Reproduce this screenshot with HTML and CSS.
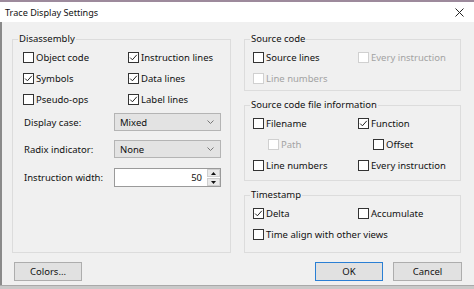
FILE: index.html
```html
<!DOCTYPE html>
<html>
<head>
<meta charset="utf-8">
<link rel="stylesheet" href="styles.css">
</head>
<body>
<div class="strip"></div>
<div class="window">
  <div class="titlebar">
    <span class="title">Trace Display Settings</span>
    <svg class="close" width="9" height="9" viewBox="0 0 9 9"><path d="M0.5 0.5 L8.5 8.5 M8.5 0.5 L0.5 8.5" stroke="#222" stroke-width="1" fill="none"/></svg>
  </div>
  <div class="content">
    <div class="columns">
      <div class="group g-dis">
        <div class="legend"><span>Disassembly</span></div>
        <div class="cbgrid left">
          <label class="cb"><svg class="box" width="11" height="11" viewBox="0 0 11 11"><rect x="0.5" y="0.5" width="10" height="10" fill="#fff" stroke="#333"/></svg>Object code</label>
          <label class="cb"><svg class="box" width="11" height="11" viewBox="0 0 11 11"><rect x="0.5" y="0.5" width="10" height="10" fill="#fff" stroke="#333"/><path d="M2.2 5.6 L4.4 7.8 L8.8 2.8" stroke="#222" fill="none"/></svg>Instruction lines</label>
          <label class="cb"><svg class="box" width="11" height="11" viewBox="0 0 11 11"><rect x="0.5" y="0.5" width="10" height="10" fill="#fff" stroke="#333"/><path d="M2.2 5.6 L4.4 7.8 L8.8 2.8" stroke="#222" fill="none"/></svg>Symbols</label>
          <label class="cb"><svg class="box" width="11" height="11" viewBox="0 0 11 11"><rect x="0.5" y="0.5" width="10" height="10" fill="#fff" stroke="#333"/><path d="M2.2 5.6 L4.4 7.8 L8.8 2.8" stroke="#222" fill="none"/></svg>Data lines</label>
          <label class="cb"><svg class="box" width="11" height="11" viewBox="0 0 11 11"><rect x="0.5" y="0.5" width="10" height="10" fill="#fff" stroke="#333"/></svg>Pseudo-ops</label>
          <label class="cb"><svg class="box" width="11" height="11" viewBox="0 0 11 11"><rect x="0.5" y="0.5" width="10" height="10" fill="#fff" stroke="#333"/><path d="M2.2 5.6 L4.4 7.8 L8.8 2.8" stroke="#222" fill="none"/></svg>Label lines</label>
        </div>
        <div class="field f-case">
          <span class="flabel">Display case:</span>
          <div class="select"><span>Mixed</span><svg class="chev" width="7" height="4" viewBox="0 0 7 4"><path d="M0.5 0.5 L3.5 3.5 L6.5 0.5" stroke="#777" fill="none"/></svg></div>
        </div>
        <div class="field f-radix">
          <span class="flabel">Radix indicator:</span>
          <div class="select"><span>None</span><svg class="chev" width="7" height="4" viewBox="0 0 7 4"><path d="M0.5 0.5 L3.5 3.5 L6.5 0.5" stroke="#777" fill="none"/></svg></div>
        </div>
        <div class="field f-width">
          <span class="flabel">Instruction width:</span>
          <div class="spinbox">
            <span class="val">50</span>
            <div class="spin">
              <div class="sbtn"><svg width="5" height="3" viewBox="0 0 5 3"><path d="M0 3 L2.5 0 L5 3 Z" fill="#111"/></svg></div>
              <div class="sbtn"><svg width="5" height="3" viewBox="0 0 5 3"><path d="M0 0 L2.5 3 L5 0 Z" fill="#111"/></svg></div>
            </div>
          </div>
        </div>
      </div>
      <div class="rightcol">
        <div class="group g-sc">
          <div class="legend"><span>Source code</span></div>
          <div class="cbgrid right">
            <label class="cb"><svg class="box" width="11" height="11" viewBox="0 0 11 11"><rect x="0.5" y="0.5" width="10" height="10" fill="#fff" stroke="#333"/></svg>Source lines</label>
            <label class="cb dis"><svg class="box" width="11" height="11" viewBox="0 0 11 11"><rect x="0.5" y="0.5" width="10" height="10" fill="#fff" stroke="#d0d0d0"/></svg>Every instruction</label>
            <label class="cb dis"><svg class="box" width="11" height="11" viewBox="0 0 11 11"><rect x="0.5" y="0.5" width="10" height="10" fill="#fff" stroke="#d0d0d0"/></svg>Line numbers</label>
          </div>
        </div>
        <div class="group g-sfi">
          <div class="legend"><span>Source code file information</span></div>
          <div class="cbgrid right">
            <label class="cb"><svg class="box" width="11" height="11" viewBox="0 0 11 11"><rect x="0.5" y="0.5" width="10" height="10" fill="#fff" stroke="#333"/></svg>Filename</label>
            <label class="cb"><svg class="box" width="11" height="11" viewBox="0 0 11 11"><rect x="0.5" y="0.5" width="10" height="10" fill="#fff" stroke="#333"/><path d="M2.2 5.6 L4.4 7.8 L8.8 2.8" stroke="#222" fill="none"/></svg>Function</label>
            <label class="cb dis indent"><svg class="box" width="11" height="11" viewBox="0 0 11 11"><rect x="0.5" y="0.5" width="10" height="10" fill="#fff" stroke="#d0d0d0"/></svg>Path</label>
            <label class="cb indent"><svg class="box" width="11" height="11" viewBox="0 0 11 11"><rect x="0.5" y="0.5" width="10" height="10" fill="#fff" stroke="#333"/></svg>Offset</label>
            <label class="cb"><svg class="box" width="11" height="11" viewBox="0 0 11 11"><rect x="0.5" y="0.5" width="10" height="10" fill="#fff" stroke="#333"/></svg>Line numbers</label>
            <label class="cb"><svg class="box" width="11" height="11" viewBox="0 0 11 11"><rect x="0.5" y="0.5" width="10" height="10" fill="#fff" stroke="#333"/></svg>Every instruction</label>
          </div>
        </div>
        <div class="group g-ts">
          <div class="legend"><span>Timestamp</span></div>
          <div class="cbgrid right">
            <label class="cb"><svg class="box" width="11" height="11" viewBox="0 0 11 11"><rect x="0.5" y="0.5" width="10" height="10" fill="#fff" stroke="#333"/><path d="M2.2 5.6 L4.4 7.8 L8.8 2.8" stroke="#222" fill="none"/></svg>Delta</label>
            <label class="cb"><svg class="box" width="11" height="11" viewBox="0 0 11 11"><rect x="0.5" y="0.5" width="10" height="10" fill="#fff" stroke="#333"/></svg>Accumulate</label>
            <label class="cb span2"><svg class="box" width="11" height="11" viewBox="0 0 11 11"><rect x="0.5" y="0.5" width="10" height="10" fill="#fff" stroke="#333"/></svg>Time align with other views</label>
          </div>
        </div>
      </div>
    </div>
    <div class="buttons">
      <div class="btn colors">Colors...</div>
      <div class="spacer"></div>
      <div class="btn ok">OK</div>
      <div class="btn cancel">Cancel</div>
    </div>
  </div>
</div>
<div class="bottomstrip"></div>
</body>
</html>
```
FILE: styles.css
```css
* { box-sizing: border-box; }
html, body { margin: 0; padding: 0; }
body {
  width: 474px;
  height: 289px;
  overflow: hidden;
  background: #f0f0f0;
  font-family: "Noto Sans", "Open Sans", sans-serif;
  font-size: 9.5px;
  color: #111;
}
.strip { height: 2px; background: #9d8a9c; }
.window {
  border-left: 2px solid #8a8a8a;
  height: 283px;
  display: flex;
  flex-direction: column;
}
.titlebar {
  height: 20px;
  background: #fff;
  display: flex;
  align-items: center;
  margin-left: -2px;
  padding: 0 10px 0 5px;
}
.title { font-size: 9.1px; color: #111; flex: 1; }
.close { display: block; margin-top: 1px; }
.content {
  flex: 1;
  padding: 17px 13px 0 10px;
}
.columns {
  display: grid;
  grid-template-columns: 219px 217px;
  column-gap: 13px;
  align-items: start;
}
.group {
  border: 1px solid #dcdcdc;
}
.legend {
  height: 14px;
  line-height: 14px;
  margin-top: -8px;
  padding-left: 5px;
}
.legend span {
  background: #f0f0f0;
  padding: 0 1px;
}
.g-dis { height: 214px; }
.g-sc { height: 52px; }
.g-sfi { height: 76px; margin-top: 14px; }
.g-ts { height: 58px; margin-top: 14px; }
.cbgrid {
  display: grid;
  grid-auto-rows: 21px;
  margin-top: 1px;
}
.cbgrid.left { grid-template-columns: 105px auto; padding-left: 10px; }
.cbgrid.right { grid-template-columns: 105px auto; padding-left: 8px; }
.cb {
  display: flex;
  align-items: center;
  gap: 2px;
  white-space: nowrap;
}
.cb .box { display: block; flex: none; }
.cb.dis { color: #a3a3a3; }
.cb.indent { padding-left: 15px; }
.cb.span2 { grid-column: 1 / span 2; }
.field {
  display: flex;
  align-items: center;
  padding-left: 11px;
}
.flabel { width: 90px; }
.f-case { margin-top: 3px; }
.f-radix { margin-top: 9px; }
.f-width { margin-top: 10px; }
.select {
  width: 107px;
  height: 18px;
  background: #e3e3e3;
  border: 1px solid #b4b4b4;
  display: flex;
  align-items: center;
  justify-content: space-between;
  padding: 0 6px 0 5px;
}
.chev { display: block; }
.spinbox {
  width: 107px;
  height: 19px;
  background: #fff;
  border: 1px solid #9a9a9a;
  display: flex;
  align-items: center;
}
.val { flex: 1; text-align: right; padding-right: 5px; }
.spin {
  width: 13px;
  height: 17px;
  display: flex;
  flex-direction: column;
  gap: 1px;
}
.sbtn {
  flex: 1;
  background: #e9e9e9;
  border: 1px solid #cfcfcf;
  display: flex;
  align-items: center;
  justify-content: center;
}
.sbtn svg { display: block; }
.buttons {
  display: flex;
  margin-top: 9px;
  height: 19px;
}
.spacer { flex: 1; }
.btn {
  height: 19px;
  width: 68px;
  background: #e1e1e1;
  border: 1px solid #adadad;
  display: flex;
  align-items: center;
  justify-content: center;
}
.btn.colors { margin-left: 2px; }
.btn.ok { border-color: #2a7fd4; }
.btn.cancel { margin-left: 10px; width: 69px; margin-right: -1px; }
.bottomstrip {
  height: 4px;
  background: #c9c9c9;
  border-top: 1px solid #a9a9a9;
}
```
